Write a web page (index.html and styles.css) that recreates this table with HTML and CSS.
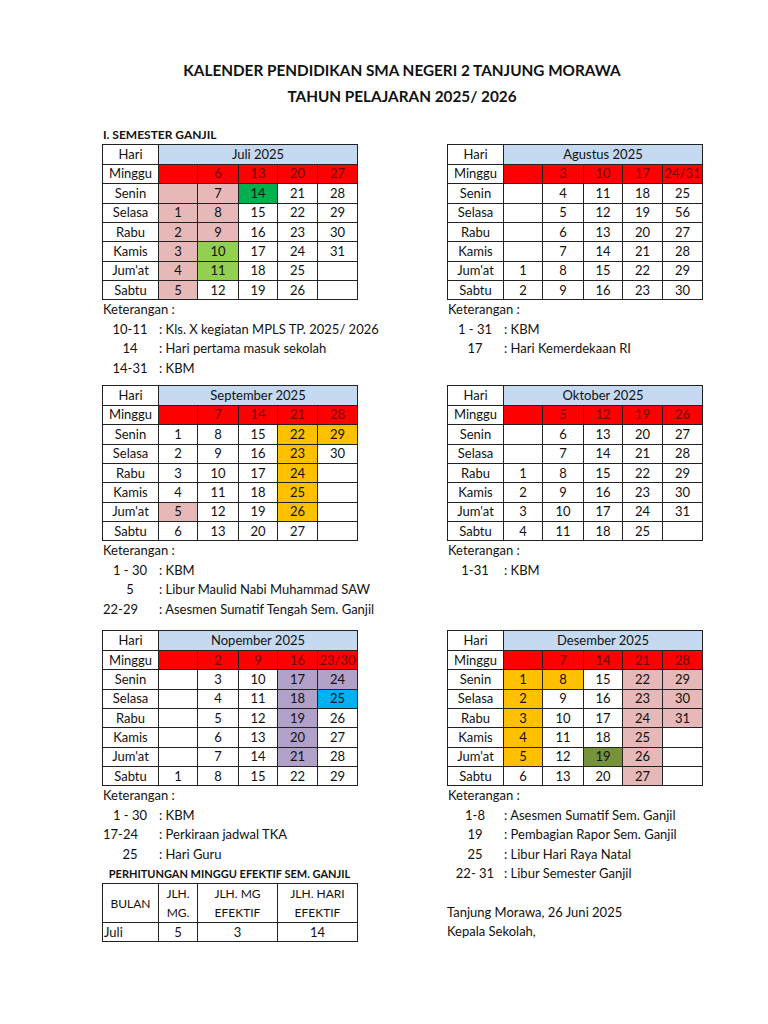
FILE: index.html
```html
<!DOCTYPE html>
<html lang="id">
<head>
<meta charset="utf-8">
<title>Kalender Pendidikan SMA Negeri 2 Tanjung Morawa</title>
<link rel="stylesheet" href="styles.css">
</head>
<body>
<main class="page">
  <h1 class="title">KALENDER PENDIDIKAN SMA NEGERI 2 TANJUNG MORAWA<br>TAHUN PELAJARAN 2025/ 2026</h1>
  <h2 class="section">I. SEMESTER GANJIL</h2>

  <div class="month-row">
    <section class="month">
      <table class="cal">
        <colgroup><col class="c-day"><col class="c1"><col class="c2"><col class="c3"><col class="c4"><col class="c5"></colgroup>
        <tr><td>Hari</td><td colspan="5" class="head">Juli 2025</td></tr>
        <tr><td>Minggu</td><td class="r"></td><td class="r">6</td><td class="r">13</td><td class="r">20</td><td class="r">27</td></tr>
        <tr><td>Senin</td><td class="pk"></td><td class="pk">7</td><td class="g">14</td><td>21</td><td>28</td></tr>
        <tr><td>Selasa</td><td class="pk">1</td><td class="pk">8</td><td>15</td><td>22</td><td>29</td></tr>
        <tr><td>Rabu</td><td class="pk">2</td><td class="pk">9</td><td>16</td><td>23</td><td>30</td></tr>
        <tr><td>Kamis</td><td class="pk">3</td><td class="lg">10</td><td>17</td><td>24</td><td>31</td></tr>
        <tr><td>Jum'at</td><td class="pk">4</td><td class="lg">11</td><td>18</td><td>25</td><td></td></tr>
        <tr><td>Sabtu</td><td class="pk">5</td><td>12</td><td>19</td><td>26</td><td></td></tr>
      </table>
      <div class="ket">
        <p class="ket-title">Keterangan :</p>
        <div class="ket-row"><span class="num">10-11</span><span class="desc">: Kls. X kegiatan MPLS TP. 2025/ 2026</span></div>
        <div class="ket-row"><span class="num">14</span><span class="desc">: Hari pertama masuk sekolah</span></div>
        <div class="ket-row"><span class="num">14-31</span><span class="desc">: KBM</span></div>
      </div>
    </section>
    <section class="month">
      <table class="cal">
        <colgroup><col class="c-day"><col class="c1"><col class="c2"><col class="c3"><col class="c4"><col class="c5"></colgroup>
        <tr><td>Hari</td><td colspan="5" class="head">Agustus 2025</td></tr>
        <tr><td>Minggu</td><td class="r"></td><td class="r">3</td><td class="r">10</td><td class="r">17</td><td class="r">24/31</td></tr>
        <tr><td>Senin</td><td></td><td>4</td><td>11</td><td>18</td><td>25</td></tr>
        <tr><td>Selasa</td><td></td><td>5</td><td>12</td><td>19</td><td>56</td></tr>
        <tr><td>Rabu</td><td></td><td>6</td><td>13</td><td>20</td><td>27</td></tr>
        <tr><td>Kamis</td><td></td><td>7</td><td>14</td><td>21</td><td>28</td></tr>
        <tr><td>Jum'at</td><td>1</td><td>8</td><td>15</td><td>22</td><td>29</td></tr>
        <tr><td>Sabtu</td><td>2</td><td>9</td><td>16</td><td>23</td><td>30</td></tr>
      </table>
      <div class="ket">
        <p class="ket-title">Keterangan :</p>
        <div class="ket-row"><span class="num">1 - 31</span><span class="desc">: KBM</span></div>
        <div class="ket-row"><span class="num">17</span><span class="desc">: Hari Kemerdekaan RI</span></div>
      </div>
    </section>
  </div>

  <div class="month-row row-2">
    <section class="month">
      <table class="cal">
        <colgroup><col class="c-day"><col class="c1"><col class="c2"><col class="c3"><col class="c4"><col class="c5"></colgroup>
        <tr><td>Hari</td><td colspan="5" class="head">September 2025</td></tr>
        <tr><td>Minggu</td><td class="r"></td><td class="r">7</td><td class="r">14</td><td class="r">21</td><td class="r">28</td></tr>
        <tr><td>Senin</td><td>1</td><td>8</td><td>15</td><td class="or">22</td><td class="or">29</td></tr>
        <tr><td>Selasa</td><td>2</td><td>9</td><td>16</td><td class="or">23</td><td>30</td></tr>
        <tr><td>Rabu</td><td>3</td><td>10</td><td>17</td><td class="or">24</td><td></td></tr>
        <tr><td>Kamis</td><td>4</td><td>11</td><td>18</td><td class="or">25</td><td></td></tr>
        <tr><td>Jum'at</td><td class="pk">5</td><td>12</td><td>19</td><td class="or">26</td><td></td></tr>
        <tr><td>Sabtu</td><td>6</td><td>13</td><td>20</td><td>27</td><td></td></tr>
      </table>
      <div class="ket">
        <p class="ket-title">Keterangan :</p>
        <div class="ket-row"><span class="num">1 - 30</span><span class="desc">: KBM</span></div>
        <div class="ket-row"><span class="num">5</span><span class="desc">: Libur Maulid Nabi Muhammad SAW</span></div>
        <div class="ket-row"><span class="num num-left">22-29</span><span class="desc">: Asesmen Sumatif Tengah Sem. Ganjil</span></div>
      </div>
    </section>
    <section class="month">
      <table class="cal">
        <colgroup><col class="c-day"><col class="c1"><col class="c2"><col class="c3"><col class="c4"><col class="c5"></colgroup>
        <tr><td>Hari</td><td colspan="5" class="head">Oktober 2025</td></tr>
        <tr><td>Minggu</td><td class="r"></td><td class="r">5</td><td class="r">12</td><td class="r">19</td><td class="r">26</td></tr>
        <tr><td>Senin</td><td></td><td>6</td><td>13</td><td>20</td><td>27</td></tr>
        <tr><td>Selasa</td><td></td><td>7</td><td>14</td><td>21</td><td>28</td></tr>
        <tr><td>Rabu</td><td>1</td><td>8</td><td>15</td><td>22</td><td>29</td></tr>
        <tr><td>Kamis</td><td>2</td><td>9</td><td>16</td><td>23</td><td>30</td></tr>
        <tr><td>Jum'at</td><td>3</td><td>10</td><td>17</td><td>24</td><td>31</td></tr>
        <tr><td>Sabtu</td><td>4</td><td>11</td><td>18</td><td>25</td><td></td></tr>
      </table>
      <div class="ket">
        <p class="ket-title">Keterangan :</p>
        <div class="ket-row"><span class="num">1-31</span><span class="desc">: KBM</span></div>
      </div>
    </section>
  </div>

  <div class="month-row row-3">
    <section class="month">
      <table class="cal">
        <colgroup><col class="c-day"><col class="c1"><col class="c2"><col class="c3"><col class="c4"><col class="c5"></colgroup>
        <tr><td>Hari</td><td colspan="5" class="head">Nopember 2025</td></tr>
        <tr><td>Minggu</td><td class="r"></td><td class="r">2</td><td class="r">9</td><td class="r">16</td><td class="r">23/30</td></tr>
        <tr><td>Senin</td><td></td><td>3</td><td>10</td><td class="pu">17</td><td class="pu">24</td></tr>
        <tr><td>Selasa</td><td></td><td>4</td><td>11</td><td class="pu">18</td><td class="bl">25</td></tr>
        <tr><td>Rabu</td><td></td><td>5</td><td>12</td><td class="pu">19</td><td>26</td></tr>
        <tr><td>Kamis</td><td></td><td>6</td><td>13</td><td class="pu">20</td><td>27</td></tr>
        <tr><td>Jum'at</td><td></td><td>7</td><td>14</td><td class="pu">21</td><td>28</td></tr>
        <tr><td>Sabtu</td><td>1</td><td>8</td><td>15</td><td>22</td><td>29</td></tr>
      </table>
      <div class="ket">
        <p class="ket-title">Keterangan :</p>
        <div class="ket-row"><span class="num">1 - 30</span><span class="desc">: KBM</span></div>
        <div class="ket-row"><span class="num num-left">17-24</span><span class="desc">: Perkiraan jadwal TKA</span></div>
        <div class="ket-row"><span class="num">25</span><span class="desc">: Hari Guru</span></div>
      </div>
      <h3 class="sum-title">PERHITUNGAN MINGGU EFEKTIF SEM. GANJIL</h3>
      <table class="sum">
        <colgroup><col class="s1"><col class="s2"><col class="s3"><col class="s4"></colgroup>
        <tr class="sum-head"><td>BULAN</td><td>JLH.<br>MG.</td><td>JLH. MG<br>EFEKTIF</td><td>JLH. HARI<br>EFEKTIF</td></tr>
        <tr class="sum-row"><td class="left">Juli</td><td>5</td><td>3</td><td>14</td></tr>
      </table>
    </section>
    <section class="month">
      <table class="cal">
        <colgroup><col class="c-day"><col class="c1"><col class="c2"><col class="c3"><col class="c4"><col class="c5"></colgroup>
        <tr><td>Hari</td><td colspan="5" class="head">Desember 2025</td></tr>
        <tr><td>Minggu</td><td class="r"></td><td class="r">7</td><td class="r">14</td><td class="r">21</td><td class="r">28</td></tr>
        <tr><td>Senin</td><td class="or">1</td><td class="or">8</td><td>15</td><td class="pk">22</td><td class="pk">29</td></tr>
        <tr><td>Selasa</td><td class="or">2</td><td>9</td><td>16</td><td class="pk">23</td><td class="pk">30</td></tr>
        <tr><td>Rabu</td><td class="or">3</td><td>10</td><td>17</td><td class="pk">24</td><td class="pk">31</td></tr>
        <tr><td>Kamis</td><td class="or">4</td><td>11</td><td>18</td><td class="pk">25</td><td></td></tr>
        <tr><td>Jum'at</td><td class="or">5</td><td>12</td><td class="ol">19</td><td class="pk">26</td><td></td></tr>
        <tr><td>Sabtu</td><td>6</td><td>13</td><td>20</td><td class="pk">27</td><td></td></tr>
      </table>
      <div class="ket">
        <p class="ket-title">Keterangan :</p>
        <div class="ket-row"><span class="num">1-8</span><span class="desc">: Asesmen Sumatif Sem. Ganjil</span></div>
        <div class="ket-row"><span class="num">19</span><span class="desc">: Pembagian Rapor Sem. Ganjil</span></div>
        <div class="ket-row"><span class="num">25</span><span class="desc">: Libur Hari Raya Natal</span></div>
        <div class="ket-row"><span class="num">22- 31</span><span class="desc">: Libur Semester Ganjil</span></div>
      </div>
      <div class="sign">
        <p>Tanjung Morawa, 26 Juni 2025</p>
        <p>Kepala Sekolah,</p>
      </div>
    </section>
  </div>
</main>
</body>
</html>
```

FILE: styles.css
```css
* { box-sizing: border-box; }

html, body {
  margin: 0;
  padding: 0;
  background: #ffffff;
}

body {
  font-family: Lato, "Open Sans", "Liberation Sans", sans-serif;
  color: #111111;
  font-size: 13px;
}

.page {
  width: 600px;
  margin-left: 102px;
  padding-top: 57px;
}

.title {
  margin: 0;
  text-align: center;
  font-size: 15.3px;
  font-weight: 700;
  line-height: 26px;
}

.section {
  margin: 16px 0 0 1px;
  font-size: 12px;
  font-weight: 700;
  line-height: 19.4px;
}

.month-row {
  display: flex;
  gap: 90px;
  align-items: flex-start;
}

.row-2 { margin-top: 7.4px; }
.row-3 { margin-top: 11.4px; }

.month {
  width: 255px;
  flex: none;
}

.cal, .sum {
  border-collapse: collapse;
  table-layout: fixed;
  width: 255px;
}

.cal td, .sum td {
  border: 1px solid #222222;
  padding: 0;
  text-align: center;
  vertical-align: middle;
  line-height: 17px;
  white-space: nowrap;
}

.cal tr { height: 19.375px; }

.c-day { width: 56px; }
.c1 { width: 39px; }
.c2 { width: 41px; }
.c3 { width: 39px; }
.c4 { width: 40px; }
.c5 { width: 40px; }

.head { background: #c5d9f1; }
.r  { background: #ff0000; color: #6e0808; }
.pk { background: #e6b8b7; }
.g  { background: #00b050; }
.lg { background: #92d050; }
.or { background: #ffc000; }
.pu { background: #b1a0c7; }
.bl { background: #00b0f0; }
.ol { background: #76933c; }

.ket p, .sign p { margin: 0; }

.ket-title {
  line-height: 19.4px;
  padding-left: 1px;
}

.ket-row {
  display: grid;
  grid-template-columns: 56px 1fr;
  line-height: 19.4px;
  white-space: nowrap;
}

.num { text-align: center; }
.num-left { text-align: left; padding-left: 1px; }
.desc { padding-left: 1px; }

.sum-title {
  margin: 0;
  text-align: center;
  font-size: 11px;
  font-weight: 700;
  line-height: 19.4px;
}

.s1 { width: 56px; }
.s2 { width: 39px; }
.s3 { width: 80px; }
.s4 { width: 80px; }

.sum .sum-head td {
  font-size: 12px;
  line-height: 19px;
  height: 38px;
}

.sum .sum-row td { height: 19px; line-height: 16px; }

.sum td.left { text-align: left; padding-left: 1px; }

.sign {
  margin-top: 19.4px;
  line-height: 19.4px;
}
```
